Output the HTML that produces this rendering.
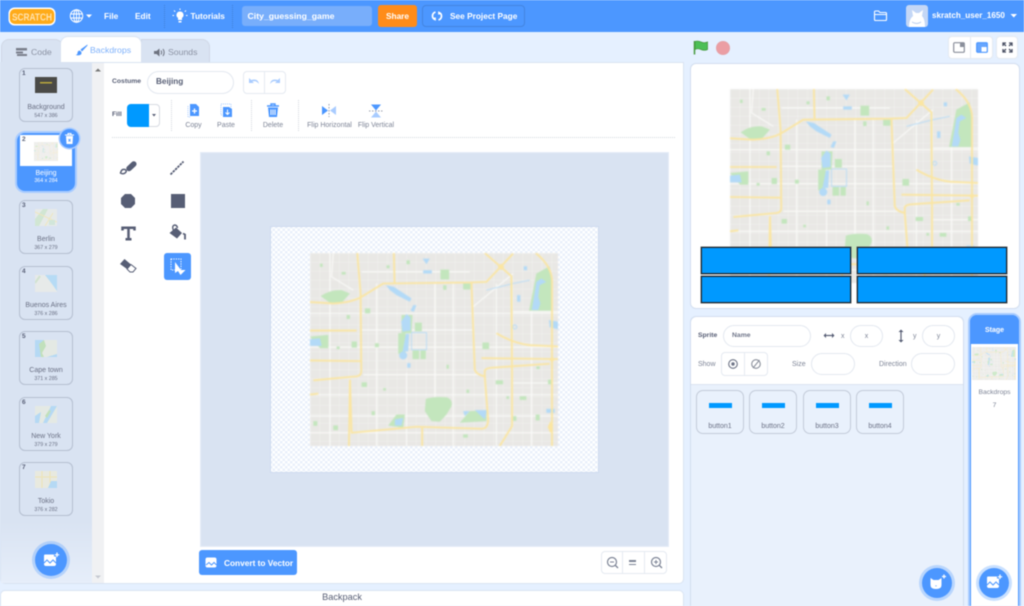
<!DOCTYPE html>
<html><head><meta charset="utf-8"><title>Scratch</title>
<style>
*{box-sizing:border-box;margin:0;padding:0}
html,body{width:1024px;height:606px;overflow:hidden;background:#e5f0ff;font-family:"Liberation Sans",sans-serif;color:#575e75}
#r{position:relative;width:1024px;height:606px;overflow:hidden;filter:blur(.4px)}
.a{position:absolute}
.t{position:absolute;white-space:nowrap;line-height:1}
.b{font-weight:bold}
.c{text-align:center}
.th{position:absolute;left:19px;width:54px;height:54px;border:1.5px solid #b5bfd0;border-radius:6px;background:#d9e3f2}
.th .n{position:absolute;left:2px;top:2px;font-size:6.5px;font-weight:bold;color:#575e75;line-height:1}
.th .l{position:absolute;left:-5px;right:-5px;top:35px;text-align:center;font-size:7px;color:#6a7084;line-height:1}
.th .s{position:absolute;left:-5px;right:-5px;top:44.5px;text-align:center;font-size:5.3px;color:#6a7084;line-height:1}
.th svg{position:absolute;opacity:.72}
.th svg.d{opacity:1}
.pill{position:absolute;border:1px solid #e3e8f0;border-radius:12px;background:#fff;font-size:7px;line-height:1}
.spr{position:absolute;top:390px;width:48px;height:44px;border:1.5px solid #c3cbd9;border-radius:7px;background:#e9f1fc}
.spr i{position:absolute;left:11.5px;top:12px;width:23px;height:4.5px;background:#0099ff}
.spr span{position:absolute;left:0;right:0;top:31.5px;text-align:center;font-size:7px;line-height:1;color:#6a7084}
.lbl{position:absolute;font-size:7px;color:#7d8496;line-height:1;white-space:nowrap;text-align:center}
.dv{position:absolute;width:0;border-left:1px dotted #d5d8de}
.sb{position:absolute;border-radius:50%;background:#4c97ff;box-shadow:0 0 0 3px rgba(76,151,255,.3)}
.stg{position:absolute;top:247px;height:27px;background:#0099ff;border:1px solid #1b2733;box-shadow:0 0 0 .5px #666}
.m{filter:blur(.55px)}
</style></head><body><div id="r">
<svg width="0" height="0" style="position:absolute"><defs>
<pattern id="ck" width="5" height="5" patternUnits="userSpaceOnUse"><rect width="5" height="5" fill="#fff"/><rect width="2.5" height="2.5" fill="#e9f0fb"/><rect x="2.5" y="2.5" width="2.5" height="2.5" fill="#e9f0fb"/></pattern>
<pattern id="gr" x="30" y="38" width="29" height="27" patternUnits="userSpaceOnUse"><path d="M0 .5H29M.5 0V27" stroke="#f7f7f5" stroke-width="2" fill="none" opacity=".7"/></pattern>
<symbol id="map" viewBox="30 38 745 582" preserveAspectRatio="none">
<rect x="30" y="38" width="745" height="582" fill="#e9e8e5"/>
<rect x="30" y="38" width="745" height="582" fill="url(#gr)"/>
<g fill="none" stroke="#fbfbf9" stroke-width="3.2">
<path d="M30 220H775M30 322H775M190 405H540M30 465H775M30 530H775M30 580H775M185 95H510M640 215H775M185 270H520M640 430H775"/>
<path d="M90 38V620M230 130V620M405 130V480M460 130V620M590 130V620M695 200V620M320 400V620M100 38L95 110L160 150M520 200L640 100"/>
</g>
<g fill="#c3e6bd">
<path d="M62 168Q90 148 125 150L150 160L125 188H90Z"/><path d="M305 225H338L335 280H305Z"/><rect x="295" y="280" width="22" height="62"/><rect x="345" y="248" width="21" height="26"/><rect x="338" y="332" width="20" height="26"/><rect x="362" y="332" width="16" height="26"/>
<path d="M378 478Q400 470 440 473Q460 480 455 500L440 525L420 547L395 545L375 515Z"/>
<path d="M710 100L750 78L757 130L755 212H688Z"/><path d="M30 290L85 285V325H60Z"/><path d="M265 558L290 525H315L310 565Z"/><path d="M480 550L510 515L560 512V545Z"/>
<rect x="422" y="88" width="26" height="30"/><rect x="548" y="308" width="20" height="20"/><rect x="490" y="130" width="22" height="18"/><rect x="195" y="205" width="16" height="15"/><rect x="155" y="305" width="16" height="18"/><rect x="185" y="428" width="16" height="14"/><rect x="588" y="422" width="22" height="12"/><rect x="660" y="470" width="20" height="11"/><rect x="100" y="558" width="14" height="14"/><rect x="708" y="525" width="12" height="18"/><rect x="225" y="310" width="12" height="12"/><rect x="430" y="135" width="10" height="14"/><rect x="140" y="225" width="10" height="12"/><rect x="40" y="545" width="12" height="14"/><rect x="490" y="585" width="14" height="10"/><rect x="640" y="530" width="10" height="14"/><rect x="745" y="420" width="10" height="14"/><rect x="215" y="515" width="10" height="12"/><rect x="320" y="60" width="10" height="12"/><rect x="260" y="75" width="9" height="9"/><rect x="125" y="95" width="12" height="8"/><rect x="60" y="70" width="8" height="10"/><rect x="110" y="320" width="9" height="8"/><rect x="440" y="375" width="7" height="12"/><rect x="620" y="470" width="8" height="8"/><rect x="710" y="380" width="10" height="8"/><rect x="500" y="450" width="8" height="10"/><rect x="250" y="445" width="8" height="8"/>
</g>
<g fill="#b3daf7">
<path d="M258 135L282 140L335 175L330 185L290 165L270 150Z"/><path d="M340 195L350 195L342 215L332 212Z"/><path d="M320 222L332 232L332 272L308 275L304 245Z"/><path d="M318 282H328L325 335H308Z"/><circle cx="310" cy="347" r="12"/><path d="M30 298L60 295L65 318H30Z"/><path d="M710 125L725 115L740 125L720 135L716 170L722 190L716 210H696L702 175Z"/><path d="M490 515L510 515L495 530ZM525 512H562L555 540Z"/><path d="M285 540L310 535L305 558H285Z"/><path d="M368 55L390 55L380 72ZM370 90H396V100H370Z"/><path d="M748 240L775 245V268L750 262Z"/><rect x="322" y="370" width="10" height="14"/><rect x="652" y="165" width="10" height="20"/><rect x="672" y="78" width="10" height="12"/><rect x="740" y="508" width="25" height="12"/>
</g>
<path d="M335 278H380V330H335ZM645 255a6 6 0 1 0 .1 0M560 150L640 130L690 120" fill="none" stroke="#b3daf7" stroke-width="2.5"/>
<g fill="none" stroke="#fbe6a2" stroke-width="5.5" stroke-linejoin="round">
<path d="M172 38L182 160L184 395Q184 408 170 410L40 422"/><path d="M282 38L284 128"/>
<path d="M30 186L100 190Q150 188 182 172L250 130L510 127L560 125L640 40"/>
<path d="M555 38L635 108L637 400V560L600 620"/>
<path d="M515 127L525 390Q530 405 555 410L565 540Q565 568 545 568L350 562L155 580L150 420"/><path d="M150 420L147 620M367 563V620"/>
<path d="M30 272L170 272M30 362L182 364M590 280Q640 310 690 316L775 320M545 355L775 358M30 465L55 462"/>
<path d="M555 410V392Q560 385 575 384L750 372"/><path d="M708 38Q760 80 757 130V620"/>
</g>
<path d="M604 70l10 10-10 10-10-10ZM757 350l9 9-9 9-9-9ZM752 545l8 18-8 18-8-18Z" fill="#fbe6a2"/>
</symbol>
</defs></svg>

<!-- header -->
<div class="a" style="left:0;top:0;width:1024px;height:32px;background:#4c97ff"></div>
<svg class="a" style="left:6px;top:5px" width="52" height="22" viewBox="0 0 52 22"><rect x="2.500" y="2.500" width="47" height="18" rx="6" fill="#fff"/><rect x="3.800" y="4" width="44.500" height="15" rx="5" fill="#ffab19"/><text x="26" y="15.300" text-anchor="middle" font-family="Liberation Sans" font-weight="bold" font-size="10" textLength="40" lengthAdjust="spacingAndGlyphs" fill="#ffe2ae">SCRATCH</text></svg>
<svg class="a" style="left:69px;top:9px" width="26" height="14" viewBox="0 0 26 14"><g fill="none" stroke="#fff" stroke-width="1"><circle cx="7.500" cy="7" r="6.200"/><ellipse cx="7.500" cy="7" rx="2.800" ry="6.200"/><path d="M1.500 5H13.500M1.500 9H13.500M7.500 1V13"/></g><path d="M17 5.500h6l-3 3.200z" fill="#fff"/></svg>
<div class="t b" style="left:104px;top:11.500px;font-size:8.300px;color:#fff">File</div>
<div class="t b" style="left:135px;top:11.500px;font-size:8.300px;color:#fff">Edit</div>
<div class="dv" style="left:164px;top:5px;height:23px;border-left-color:#4280d8"></div>
<svg class="a" style="left:172px;top:8px" width="16" height="16" viewBox="0 0 16 16"><path d="M8 3.500a3.500 3.500 0 0 1 2 6.400V12H6V9.900A3.500 3.500 0 0 1 8 3.500ZM6.500 13h3v1.500h-3z" fill="#fff"/><path d="M8 .5V2M2 2.500l1.200 1.200M14 2.500l-1.200 1.200M.5 7.500H2M14 7.500h1.500" stroke="#fff" stroke-width="1"/></svg>
<div class="t b" style="left:190.500px;top:11.500px;font-size:8.300px;color:#fff">Tutorials</div>
<div class="dv" style="left:232px;top:5px;height:23px;border-left-color:#4280d8"></div>
<div class="a" style="left:242px;top:6px;width:130px;height:20px;background:#78aefb;border-radius:3px"></div>
<div class="t b" style="left:247.500px;top:11.500px;font-size:8.700px;color:#fff">City_guessing_game</div>
<div class="a" style="left:378px;top:5px;width:39px;height:22px;background:#ff8c1a;border-radius:3px"></div>
<div class="t b c" style="left:378px;top:11.500px;width:39px;font-size:8.300px;color:#fff">Share</div>
<div class="a" style="left:422px;top:5px;width:103px;height:22px;background:#4c97ff;border:1px solid #4385e0;border-radius:4px"></div>
<svg class="a" style="left:431px;top:10px" width="12" height="12" viewBox="0 0 12 12"><path d="M4.500 2Q1.500 3 1.500 6Q1.500 8.500 4 9.500V7.500M7.500 10Q10.500 9 10.500 6Q10.500 3.500 8 2.500V4.500" fill="none" stroke="#fff" stroke-width="1.700"/></svg>
<div class="t b" style="left:450px;top:11.500px;font-size:8.300px;color:#fff">See Project Page</div>
<svg class="a" style="left:873px;top:9px" width="15" height="13" viewBox="0 0 15 13"><path d="M1.500 4V3Q1.500 2 2.500 2H5.500L7 3.500H12.500Q13.500 3.500 13.500 4.500V10.500Q13.500 11.500 12.500 11.500H2.500Q1.500 11.500 1.500 10.500ZM1.500 5.500H13.500" fill="none" stroke="#fff" stroke-width="1.100"/></svg>
<div class="a" style="left:906px;top:5px;width:22px;height:22px;background:#c4d7f6;border-radius:3px;overflow:hidden"><svg width="22" height="22" viewBox="0 0 22 22"><path d="M3 22Q3 14 7 11L6 5L10 8H13L17 5L16 11Q19 14 19 22Z" fill="#fff"/><path d="M6 17Q11 20 15 17" stroke="#b9cdee" fill="none"/></svg></div>
<div class="t b" style="left:932px;top:11.500px;font-size:8.100px;color:#fff">skratch_user_1650</div>
<svg class="a" style="left:1010px;top:13px" width="8" height="6" viewBox="0 0 8 6"><path d="M.5 1h6.500l-3.200 3.500z" fill="#fff"/></svg>

<!-- tabs -->
<div class="a" style="left:1px;top:39px;width:62px;height:24px;background:#d9e3f2;border:1px solid #cfd7e5;border-bottom:0;border-radius:8px 8px 0 0"></div>
<div class="a" style="left:141px;top:39px;width:69px;height:24px;background:#d9e3f2;border:1px solid #cfd7e5;border-bottom:0;border-radius:0 8px 0 0"></div>
<div class="a" style="left:60px;top:36px;width:82px;height:27px;background:#fff;border:1px solid #d9e3f2;border-bottom:0;border-radius:8px 8px 0 0"></div>
<svg class="a" style="left:16px;top:48px" width="11" height="8" viewBox="0 0 11 8"><path d="M0 0h11v2.500H0zM0 3.500h7v2H0zM1 6h10v2H1z" fill="#7a7f8c"/></svg>
<div class="t" style="left:31px;top:47.500px;font-size:8.700px;color:#8b92a3">Code</div>
<svg class="a" style="left:75px;top:44px" width="13" height="12" viewBox="0 0 13 12"><path d="M12.500.5L5.500 5.500 7 7.500 12.500 1.500ZM4.500 6.500Q2.500 7 2.500 9 2.500 10.500.5 11 4 12 6 10.500 7 9 6 7.500Z" fill="#4c97ff"/></svg>
<div class="t" style="left:90px;top:46px;font-size:8.700px;color:#7fb2fb">Backdrops</div>
<svg class="a" style="left:154px;top:48px" width="12" height="9" viewBox="0 0 12 9"><path d="M0 3h2.500L5.500.5v8L2.500 6H0z" fill="#6e7380"/><path d="M7 2.500q1.300 2 0 4M9 1q2.300 3.500 0 7" stroke="#6e7380" fill="none"/></svg>
<div class="t" style="left:168px;top:47.500px;font-size:8.700px;color:#8b92a3">Sounds</div>

<!-- editor panel -->
<div class="a" style="left:0;top:62px;width:684px;height:522px;background:#fff;border:1px solid #d9e3f2;border-radius:0 0 5px 5px"></div>
<div class="a" style="left:1px;top:63px;width:91px;height:520px;background:#d9e3f2"></div>
<div class="a" style="left:1px;top:520px;width:91px;height:63px;background:linear-gradient(#d9e3f2,#e6eefa)"></div>
<div class="a" style="left:92px;top:63px;width:12px;height:520px;background:#f0f1f3"></div>
<svg class="a" style="left:94px;top:67px" width="8" height="6"><path d="M1 4.500h6l-3-3z" fill="#757575"/></svg>
<svg class="a" style="left:94px;top:574px" width="8" height="6"><path d="M1 1.500h6l-3 3z" fill="#c5c9d1"/></svg>

<!-- thumbnails -->
<div class="th" style="top:68px"><span class="n">1</span><svg class="d" style="left:15px;top:8px" width="22" height="16"><rect width="22" height="16" fill="#4a4a47"/><rect x="5" y="5" width="12" height="1.500" fill="#b9a83c"/></svg><span class="l">Background</span><span class="s">547 x 386</span></div>
<div class="a" style="left:17px;top:133px;width:58px;height:58px;border-radius:8px;background:#4c97ff;box-shadow:0 0 0 2px #a9ccff"></div>
<div class="a" style="left:20px;top:135px;width:52px;height:31px;background:#fff"></div>
<div class="t b" style="left:22px;top:137px;font-size:6.500px;color:#575e75">2</div>
<svg class="a" style="left:34px;top:142px;opacity:.7" width="24" height="19"><use href="#map" width="24" height="19"/></svg>
<div class="t c" style="left:19px;width:54px;top:169.500px;font-size:7px;color:#fff">Beijing</div>
<div class="t c" style="left:19px;width:54px;top:178.500px;font-size:5.300px;color:#fff">364 x 284</div>
<div class="a" style="left:60px;top:129px;width:19px;height:19px;border-radius:50%;background:#4c97ff;box-shadow:0 0 0 1.500px #a9ccff"></div>
<svg class="a" style="left:64px;top:132px" width="11" height="13" viewBox="0 0 11 13"><path d="M1 3h9M4 3V1.500h3V3" stroke="#fff" fill="none"/><path d="M2 4h7L8.500 12h-6z" fill="#fff"/><path d="M4.500 7l2 2.500M6.500 7l-2 2.500" stroke="#4c97ff" stroke-width=".8"/></svg>
<div class="th" style="top:200px"><span class="n">3</span><svg style="left:15px;top:8px" width="22" height="17"><rect width="22" height="17" fill="#eceee6"/><path d="M0 10L8 0h5L4 17H0z" fill="#cfe8c8"/><path d="M0 3L22 13M10 17L18 4" stroke="#f8e8ac"/><rect x="14" y="11" width="6" height="5" fill="#cfe8d2"/></svg><span class="l">Berlin</span><span class="s">367 x 279</span></div>
<div class="th" style="top:266px"><span class="n">4</span><svg style="left:15px;top:8px" width="22" height="17"><rect width="22" height="17" fill="#edeee6"/><path d="M10 0H22V16Q15 6 10 0Z" fill="#a9d9f7"/><path d="M0 8L5 1" stroke="#cfe4c4" stroke-width="2"/></svg><span class="l">Buenos Aires</span><span class="s">376 x 286</span></div>
<div class="th" style="top:331px"><span class="n">5</span><svg style="left:15px;top:8px" width="22" height="17"><rect width="22" height="17" fill="#e9ecdf"/><path d="M0 0H9L5 6 7 17H0Z" fill="#a8d6f5"/><path d="M4 4L9 0 11 6 7 13 9 17H6Z" fill="#b9e0a6"/><path d="M12 17L22 14V17Z" fill="#a8d6f5"/></svg><span class="l">Cape town</span><span class="s">371 x 285</span></div>
<div class="th" style="top:397px"><span class="n">6</span><svg style="left:15px;top:8px" width="22" height="17"><rect width="22" height="17" fill="#e9ecdf"/><path d="M8 17L16 0H22L12 17ZM0 10L6 6 4 17H0Z" fill="#a8d6f5"/><path d="M10 10L14 4l2 1-4 7z" fill="#b9e0a6"/></svg><span class="l">New York</span><span class="s">379 x 279</span></div>
<div class="th" style="top:462px"><span class="n">7</span><svg style="left:15px;top:8px" width="22" height="17"><rect width="22" height="17" fill="#efecd9"/><path d="M0 6H22M7 0V17M15 0V12" stroke="#f7e3a0"/><path d="M13 17L16 10H22V17Z" fill="#a8d6f5"/></svg><span class="l">Tokio</span><span class="s">376 x 282</span></div>
<div class="sb" style="left:35px;top:544px;width:32px;height:32px"></div>
<svg class="a" style="left:43px;top:552px" width="17" height="16" viewBox="0 0 17 16"><path d="M2 2.500H11V4.500H13V12Q13 14 11 14H3Q1 14 1 12V4Q1 2.500 2 2.500Z" fill="#fff"/><path d="M1 11L4 8 7 11 10 8 13 11" stroke="#4c97ff" fill="none"/><path d="M14 .5V5M11.800 2.800H16.200" stroke="#fff" stroke-width="1.200"/></svg>

<!-- toolbar -->
<div class="t b" style="left:112px;top:79px;font-size:6.800px;color:#575e75">Costume</div>
<div class="pill" style="left:147px;top:71px;width:87px;height:23px"></div>
<div class="t b" style="left:156px;top:78px;font-size:8.200px;color:#575e75">Beijing</div>
<div class="a" style="left:243px;top:71px;width:43px;height:23px;border:1px solid #e5eaf1;border-radius:4px"></div>
<div class="a" style="left:264px;top:71px;width:1px;height:23px;background:#e5eaf1"></div>
<svg class="a" style="left:248px;top:77px" width="12" height="10" viewBox="0 0 12 10"><path d="M1 1V6H6L4.300 4.500Q8 3 11 7Q10 1 3.200 3Z" fill="#a9ccff"/></svg>
<svg class="a" style="left:269px;top:77px" width="12" height="10" viewBox="0 0 12 10"><path d="M11 1V6H6L7.700 4.500Q4 3 1 7Q2 1 8.800 3Z" fill="#a9ccff"/></svg>
<div class="t b" style="left:112px;top:112px;font-size:6.800px;color:#575e75">Fill</div>
<div class="a" style="left:127px;top:104px;width:33px;height:23px;background:#fff;border:1px solid #d7dbe2;border-radius:4px"></div>
<div class="a" style="left:127px;top:104px;width:22px;height:23px;background:#0099ff;border-radius:4px 0 0 4px"></div>
<svg class="a" style="left:151px;top:113px" width="6" height="4"><path d="M1 1h4L3 3.500z" fill="#575e75"/></svg>
<div class="dv" style="left:171px;top:100px;height:31px"></div>
<div class="dv" style="left:251px;top:100px;height:31px"></div>
<div class="dv" style="left:298px;top:100px;height:31px"></div>
<svg class="a" style="left:187px;top:103px" width="13" height="15" viewBox="0 0 13 15"><path d="M3 1H9L12 4V13H3Z" fill="#4c97ff"/><path d="M7.500 5.500v5M5 8h5" stroke="#fff" stroke-width="1.300"/><path d="M1 3V14H3" stroke="#a9ccff" stroke-dasharray="1" fill="none"/></svg>
<svg class="a" style="left:220px;top:103px" width="13" height="15" viewBox="0 0 13 15"><rect x="1" y="1" width="10" height="11" fill="none" stroke="#a9ccff" stroke-dasharray="1"/><path d="M3 4H9L12 6V14H3Z" fill="#4c97ff"/><path d="M7.500 6.500v5M5.500 9.500l2 2 2-2" stroke="#fff" fill="none"/></svg>
<svg class="a" style="left:266px;top:103px" width="14" height="15" viewBox="0 0 14 15"><path d="M1 3H13M5 3V1H9V3" stroke="#4c97ff" stroke-width="1.400" fill="none"/><path d="M2 4.500H12L11 14H3Z" fill="#4c97ff"/><path d="M5 6.500V12M7 6.500V12M9 6.500V12" stroke="#fff"/></svg>
<svg class="a" style="left:322px;top:104px" width="14" height="13" viewBox="0 0 14 13"><path d="M0 2L6 6.500 0 11Z" fill="#4c97ff"/><path d="M14 2L8 6.500 14 11Z" fill="#a9ccff"/><path d="M7 0V13" stroke="#9aa0ae" stroke-dasharray="1.500"/></svg>
<svg class="a" style="left:369px;top:104px" width="14" height="14" viewBox="0 0 14 14"><path d="M2 .5H12L7 6.500Z" fill="#4c97ff"/><path d="M2 13.500H12L7 7.500Z" fill="#a9ccff"/><path d="M0 7H14" stroke="#9aa0ae" stroke-dasharray="1.500"/></svg>
<div class="lbl" style="left:173.500px;top:121.500px;width:40px">Copy</div>
<div class="lbl" style="left:206px;top:121.500px;width:40px">Paste</div>
<div class="lbl" style="left:253px;top:121.500px;width:40px">Delete</div>
<div class="lbl" style="left:299.500px;top:121.500px;width:60px">Flip Horizontal</div>
<div class="lbl" style="left:346px;top:121.500px;width:60px">Flip Vertical</div>
<div class="a" style="left:112px;top:137px;width:563px;border-top:1px dotted #d5d8de"></div>

<!-- tools -->
<svg class="a" style="left:119px;top:160px" width="18" height="16" viewBox="0 0 18 16"><path d="M10 8.500L14.800 4" stroke="#575e75" stroke-width="5.500" stroke-linecap="round"/><path d="M1.500 13Q2.500 8.500 6 9.500Q8.500 11 6 13Q4 14.500 1.500 13Z" fill="#fff" stroke="#575e75" stroke-width="1.500"/></svg>
<svg class="a" style="left:169px;top:160px" width="16" height="16" viewBox="0 0 16 16"><path d="M1.500 14.500L14.500 1.500" stroke="#575e75" stroke-width="1.800" stroke-dasharray="2.500 .8"/></svg>
<svg class="a" style="left:120px;top:193px" width="16" height="16" viewBox="0 0 16 16"><path d="M5 1H11L15 5V11L11 15H5L1 11V5Z" fill="#575e75"/></svg>
<div class="a" style="left:171px;top:194px;width:13.500px;height:13.500px;background:#575e75"></div>
<svg class="a" style="left:121px;top:226px" width="15" height="15" viewBox="0 0 15 15"><path d="M1.500 4.500V1.800H13.500V4.500M7.500 2V13M4.500 13.200H10.500" fill="none" stroke="#575e75" stroke-width="2.500"/></svg>
<svg class="a" style="left:168px;top:224px" width="19" height="18" viewBox="0 0 19 18"><path d="M1.500 9L8 3.500L14 9L9 14.500Z" fill="#575e75"/><path d="M5.500 6.500Q3.500 2 6.500 1Q9 1 9.500 4" stroke="#575e75" stroke-width="1.400" fill="none"/><path d="M15 9.500L17 10.500V15.500" stroke="#575e75" stroke-width="1.800" fill="none"/></svg>
<svg class="a" style="left:119px;top:258px" width="18" height="16" viewBox="0 0 18 16"><path d="M1 6L5.500 1L12 6.500L8 11Z" fill="#575e75"/><path d="M8 11L12 6.500L17 10.500L14 14H11Z" fill="#fff" stroke="#575e75"/></svg>
<div class="a" style="left:164px;top:253px;width:27px;height:27px;background:#4c97ff;border-radius:3px"></div>
<svg class="a" style="left:170px;top:258px" width="18" height="18" viewBox="0 0 18 18"><rect x="1" y="1" width="10" height="11" fill="none" stroke="#fff" stroke-dasharray="1.200"/><path d="M5 4V15L8 13 10.500 17 15.500 12H11Z" fill="#fff"/></svg>

<!-- canvas -->
<div class="a" style="left:200px;top:152px;width:469px;height:395px;background:#d9e3f2;border:1px solid #e5edf8"></div>
<svg class="a" style="left:270px;top:226px" width="329" height="247"><rect width="329" height="247" fill="url(#ck)"/><rect x=".5" y=".5" width="328" height="246" fill="none" stroke="#cfdbef"/></svg>
<svg class="a m" style="left:310px;top:253px" width="248" height="193"><use href="#map" width="248" height="193"/></svg>
<div class="a" style="left:199px;top:550px;width:98px;height:25px;background:#4c97ff;border-radius:3px"></div>
<svg class="a" style="left:205px;top:557px" width="13" height="12" viewBox="0 0 13 12"><rect x=".5" y=".5" width="11" height="10" rx="2" fill="#fff"/><path d="M1 8L4 5.500 6.500 8 9 5.500 11.500 8" stroke="#4c97ff" fill="none"/></svg>
<div class="t b" style="left:224px;top:559px;font-size:8.300px;color:#fff">Convert to Vector</div>
<div class="a" style="left:601px;top:551px;width:66px;height:23px;background:#fff;border:1px solid #e5eaf1;border-radius:4px"></div>
<div class="a" style="left:622px;top:551px;width:1px;height:23px;background:#e5eaf1"></div>
<div class="a" style="left:644px;top:551px;width:1px;height:23px;background:#e5eaf1"></div>
<svg class="a" style="left:606px;top:556px" width="13" height="13" viewBox="0 0 13 13"><circle cx="6" cy="6" r="4.500" fill="none" stroke="#7d8496" stroke-width="1.200"/><path d="M9.500 9.500L12 12" stroke="#7d8496" stroke-width="1.300"/><path d="M4 6H8" stroke="#7d8496"/></svg>
<div class="a" style="left:629px;top:560px;width:7px;height:1.500px;background:#7d8496"></div>
<div class="a" style="left:629px;top:563.500px;width:7px;height:1.500px;background:#7d8496"></div>
<svg class="a" style="left:650px;top:556px" width="13" height="13" viewBox="0 0 13 13"><circle cx="6" cy="6" r="4.500" fill="none" stroke="#7d8496" stroke-width="1.200"/><path d="M9.500 9.500L12 12" stroke="#7d8496" stroke-width="1.300"/><path d="M4 6H8M6 4V8" stroke="#7d8496"/></svg>

<!-- backpack -->
<div class="a" style="left:0;top:590px;width:684px;height:20px;background:#fff;border:1px solid #d9e3f2;border-radius:5px 5px 0 0"></div>
<div class="t c" style="left:0;width:684px;top:593px;font-size:9.200px;color:#575e75">Backpack</div>

<!-- stage controls -->
<svg class="a" style="left:693px;top:40px" width="16" height="15" viewBox="0 0 16 15"><path d="M1.500 1V14.500" stroke="#45993d" stroke-width="1.500"/><path d="M2 1.500Q5 .5 8 2T14.500 2V9.500Q11.500 11 8 9.500T2 9.500Z" fill="#4cbf56" stroke="#45993d" stroke-width=".8"/></svg>
<div class="a" style="left:715.500px;top:40.500px;width:14px;height:14px;border-radius:50%;background:#eb9ea4;border:1px solid #e5a0a6"></div>
<div class="a" style="left:948px;top:36px;width:45px;height:23px;background:#fff;border-radius:4px;border:1px solid #e5eaf1"></div>
<div class="a" style="left:969.500px;top:36px;width:1px;height:23px;background:#e5eaf1"></div>
<svg class="a" style="left:953px;top:42px" width="12" height="11" viewBox="0 0 12 11"><rect x=".7" y=".7" width="10.600" height="9.600" rx="1" fill="none" stroke="#8a8f9b" stroke-width="1.200"/><rect x="7" y="1" width="4" height="4" fill="#8a8f9b"/></svg>
<svg class="a" style="left:975.500px;top:42px" width="12" height="11" viewBox="0 0 12 11"><rect x=".7" y=".7" width="10.600" height="9.600" rx="1" fill="none" stroke="#4c97ff" stroke-width="1.200"/><path d="M1 1H5.500V10H1ZM5.500 1H11V5H5.500Z" fill="#4c97ff" opacity=".85"/></svg>
<div class="a" style="left:996px;top:36px;width:22px;height:23px;background:#fff;border-radius:4px;border:1px solid #e5eaf1"></div>
<svg class="a" style="left:1002px;top:42px" width="11" height="11" viewBox="0 0 11 11"><path d="M1 4V1H4M7 1H10V4M10 7V10H7M4 10H1V7M1 1L4 4M10 1L7 4M10 10L7 7M1 10L4 7" fill="none" stroke="#4d5366" stroke-width="1.300"/></svg>

<!-- stage -->
<div class="a" style="left:690px;top:63px;width:330px;height:246px;background:#fff;border:1px solid #d3deef;border-radius:6px"></div>
<svg class="a m" style="left:730px;top:89px" width="248" height="194"><use href="#map" width="248" height="194"/></svg>
<div class="stg" style="left:701px;width:150px"></div>
<div class="stg" style="left:857px;width:150px"></div>
<div class="stg" style="left:701px;top:276px;width:150px"></div>
<div class="stg" style="left:857px;top:276px;width:150px"></div>

<!-- sprite panel -->
<div class="a" style="left:690px;top:316px;width:274px;height:294px;background:#e9f1fc;border:1px solid #d3deef;border-radius:6px 6px 0 0"></div>
<div class="a" style="left:691px;top:317px;width:272px;height:68px;background:#fff;border-bottom:1px solid #dbe3f0;border-radius:6px 6px 0 0"></div>
<div class="t b" style="left:698px;top:333px;font-size:6.800px;color:#575e75">Sprite</div>
<div class="pill" style="left:723px;top:325px;width:88px;height:22px"></div>
<div class="t" style="left:732px;top:333px;font-size:6.800px;color:#575e75;font-weight:bold;opacity:.85">Name</div>
<svg class="a" style="left:823px;top:332px" width="12" height="7" viewBox="0 0 12 7"><path d="M2 3.500H10" stroke="#575e75" stroke-width="1.200"/><path d="M3 1L.5 3.500 3 6M9 1L11.500 3.500 9 6" fill="#575e75"/></svg>
<div class="t" style="left:841px;top:332.500px;font-size:7px;color:#7d8496">x</div>
<div class="pill c" style="left:850px;top:325px;width:33px;height:22px;padding-top:7px;color:#7d8496">x</div>
<svg class="a" style="left:897px;top:329px" width="8" height="14" viewBox="0 0 8 14"><path d="M4 2V12" stroke="#575e75" stroke-width="1.200"/><path d="M1.500 3L4 .5 6.500 3ZM1.500 11L4 13.500 6.500 11Z" fill="#575e75"/></svg>
<div class="t" style="left:913px;top:332.500px;font-size:7px;color:#7d8496">y</div>
<div class="pill c" style="left:922px;top:325px;width:33px;height:22px;padding-top:7px;color:#7d8496">y</div>
<div class="t" style="left:698px;top:361px;font-size:7px;color:#7d8496">Show</div>
<div class="a" style="left:721px;top:352px;width:47px;height:24px;border:1px solid #e5eaf1;border-radius:4px"></div>
<div class="a" style="left:744px;top:352px;width:1px;height:24px;background:#e5eaf1"></div>
<svg class="a" style="left:727px;top:358px" width="12" height="12" viewBox="0 0 12 12"><circle cx="6" cy="6" r="4.300" fill="none" stroke="#6e7486" stroke-width="1.100"/><circle cx="6" cy="6" r="1.700" fill="#6e7486"/></svg>
<svg class="a" style="left:750px;top:358px" width="12" height="12" viewBox="0 0 12 12"><circle cx="6" cy="6" r="4.300" fill="none" stroke="#8a8f9b" stroke-width="1.100"/><path d="M3 10L9.500 2" stroke="#8a8f9b"/></svg>
<div class="t" style="left:792px;top:361px;font-size:7px;color:#7d8496">Size</div>
<div class="pill" style="left:811px;top:353px;width:44px;height:22px"></div>
<div class="t" style="left:879px;top:361px;font-size:7px;color:#7d8496">Direction</div>
<div class="pill" style="left:911px;top:353px;width:44px;height:22px"></div>
<div class="spr" style="left:696px"><i></i><span>button1</span></div>
<div class="spr" style="left:749px"><i></i><span>button2</span></div>
<div class="spr" style="left:803px"><i></i><span>button3</span></div>
<div class="spr" style="left:856px"><i></i><span>button4</span></div>
<div class="sb" style="left:922px;top:568px;width:30px;height:30px"></div>
<svg class="a" style="left:929px;top:574px" width="18" height="17" viewBox="0 0 18 17"><path d="M1.500 4L4.500 6H9.500L12.500 4V11Q12.500 15 7 15T1.500 11Z" fill="#fff"/><path d="M6 11.500H8L7 12.500Z" fill="#4c97ff"/><path d="M15 .500V4.500M13 2.500H17" stroke="#fff" stroke-width="1.200"/></svg>

<!-- stage selector -->
<div class="a" style="left:968px;top:313px;width:53px;height:300px;border-radius:9px 9px 0 0;border:2px solid #a9ccff"></div>
<div class="a" style="left:970px;top:315px;width:49px;height:295px;background:#fff;border:1px solid #4c97ff;border-radius:7px 7px 0 0"></div>
<div class="a" style="left:970px;top:315px;width:49px;height:29px;background:#4c97ff;border-radius:7px 7px 0 0"></div>
<div class="t b c" style="left:970px;width:49px;top:326.500px;font-size:7px;color:#fff">Stage</div>
<svg class="a" style="left:972px;top:347px;opacity:.8" width="44" height="33"><use href="#map" width="44" height="33"/></svg>
<div class="t c" style="left:970px;width:49px;top:389.500px;font-size:6.800px;color:#7d8496">Backdrops</div>
<div class="t c" style="left:970px;width:49px;top:403px;font-size:6.800px;color:#7d8496">7</div>
<div class="sb" style="left:979px;top:568px;width:30px;height:30px"></div>
<svg class="a" style="left:986px;top:574px" width="17" height="16" viewBox="0 0 17 16"><path d="M2 2.500H11V4.500H13V12Q13 14 11 14H3Q1 14 1 12V4Q1 2.500 2 2.500Z" fill="#fff"/><path d="M1 11L4 8 7 11 10 8 13 11" stroke="#4c97ff" fill="none"/><path d="M14 .5V5M11.800 2.800H16.200" stroke="#fff" stroke-width="1.200"/></svg>
</div></body></html>
